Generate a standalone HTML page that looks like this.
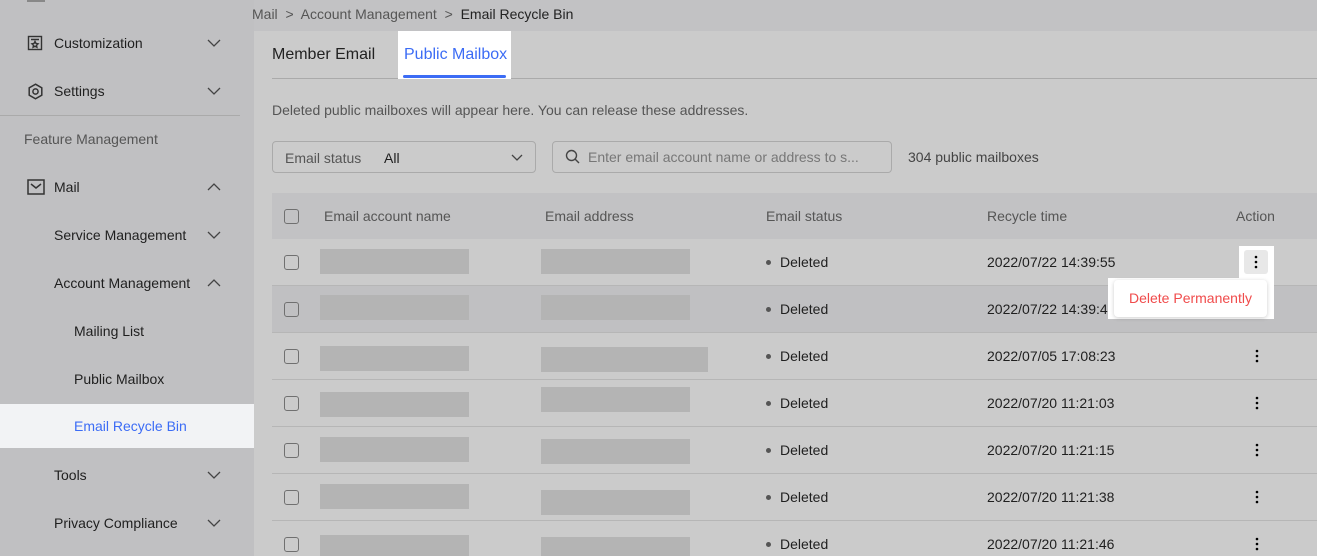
<!DOCTYPE html>
<html><head><style>
*{box-sizing:border-box;margin:0;padding:0}
html{width:1317px;height:556px;overflow:hidden}
body{width:1317px;height:556px;overflow:hidden;background:#c2c2c4;font-family:"Liberation Sans",sans-serif;font-size:14px;color:#1f1f1f;position:relative}
.sb{position:absolute;left:0;top:0;width:254px;height:556px;background:#c0c0c2}
.it{position:absolute;left:0;width:254px;height:44px;display:flex;align-items:center}
.chev{position:absolute;left:207px;width:14px;height:14px}
.main{position:absolute;left:254px;top:31px;width:1063px;height:525px;background:#cbcbcb}
.abs{position:absolute}
.row{position:absolute;left:272px;width:1045px;height:47px;border-bottom:1px solid #b6b6b6}
.cb{position:absolute;left:12px;top:16px;width:15px;height:15px;border:1px solid #707070;border-radius:3px}
.ph{position:absolute;height:25px;background:#b4b4b4}
.st{position:absolute;left:494px;top:15px}
.st:before{content:"";display:inline-block;width:5px;height:5px;border-radius:50%;background:#555;margin-right:9px;vertical-align:2px}
.tm{position:absolute;left:715px;top:15px}
.dots{position:absolute;left:982px;top:15px;width:6px;height:16px}
</style></head><body>
<div class="sb">
<div class="abs" style="left:27px;top:0;width:18px;height:2px;background:#888"></div>
<div class="it" style="top:21px"><svg style="position:absolute;left:27px" width="16" height="16" viewBox="0 0 16 16" fill="none" stroke="#333" stroke-width="1.4"><rect x="1.5" y="1.5" width="13" height="13"/><path d="M4 4.5h8M8 6.5l1 2 2 .3-1.5 1.4.4 2L8 11.2 6.1 12.2l.4-2L5 8.8l2-.3z"/></svg><span style="margin-left:54px">Customization</span><svg class="chev" viewBox="0 0 14 14"><path d="M1 4l6 6 6-6" fill="none" stroke="#444" stroke-width="1.3"/></svg></div>
<div class="it" style="top:69px"><svg style="position:absolute;left:27px" width="17" height="17" viewBox="0 0 17 17" fill="none" stroke="#333" stroke-width="1.5"><path d="M8.5 1.2l6.3 3.6v7.4l-6.3 3.6-6.3-3.6V4.8z"/><circle cx="8.5" cy="8.5" r="2.6"/></svg><span style="margin-left:54px">Settings</span><svg class="chev" viewBox="0 0 14 14"><path d="M1 4l6 6 6-6" fill="none" stroke="#444" stroke-width="1.3"/></svg></div>
<div class="abs" style="left:0;top:115px;width:240px;height:1px;background:#aaa"></div>
<div class="it" style="top:117px;color:#555"><span style="margin-left:24px">Feature Management</span></div>
<div class="it" style="top:165px"><svg style="position:absolute;left:27px" width="18" height="16" viewBox="0 0 18 16" fill="none" stroke="#333" stroke-width="1.5"><rect x="1" y="1" width="16" height="14"/><path d="M4 5l5 4 5-4"/></svg><span style="margin-left:54px">Mail</span><svg class="chev" viewBox="0 0 14 14"><path d="M1 10l6-6 6 6" fill="none" stroke="#444" stroke-width="1.3"/></svg></div>
<div class="it" style="top:213px"><span style="margin-left:54px">Service Management</span><svg class="chev" viewBox="0 0 14 14"><path d="M1 4l6 6 6-6" fill="none" stroke="#444" stroke-width="1.3"/></svg></div>
<div class="it" style="top:261px"><span style="margin-left:54px">Account Management</span><svg class="chev" viewBox="0 0 14 14"><path d="M1 10l6-6 6 6" fill="none" stroke="#444" stroke-width="1.3"/></svg></div>
<div class="it" style="top:309px"><span style="margin-left:74px">Mailing List</span></div>
<div class="it" style="top:357px"><span style="margin-left:74px">Public Mailbox</span></div>
<div class="it" style="top:404px;background:#f2f3f5;color:#3c6cf5"><span style="margin-left:74px">Email Recycle Bin</span></div>
<div class="it" style="top:453px"><span style="margin-left:54px">Tools</span><svg class="chev" viewBox="0 0 14 14"><path d="M1 4l6 6 6-6" fill="none" stroke="#444" stroke-width="1.3"/></svg></div>
<div class="it" style="top:501px"><span style="margin-left:54px">Privacy Compliance</span><svg class="chev" viewBox="0 0 14 14"><path d="M1 4l6 6 6-6" fill="none" stroke="#444" stroke-width="1.3"/></svg></div>
</div>
<div class="abs" style="left:252px;top:6px;color:#555">Mail &nbsp;&gt;&nbsp; Account Management &nbsp;&gt;&nbsp; <span style="color:#222">Email Recycle Bin</span></div>
<div class="main"></div>
<div class="abs" style="left:272px;top:78px;width:1045px;height:1px;background:#aaa"></div>
<div class="abs" style="left:272px;top:46px;font-size:16px;color:#222">Member Email</div>
<div class="abs" style="left:398px;top:31px;width:113px;height:48px;background:#fff"><div style="position:absolute;left:6px;top:15px;font-size:16px;color:#3c6cf5">Public Mailbox</div><div style="position:absolute;left:5px;bottom:1px;width:103px;height:3px;background:#3c6cf5;border-radius:2px"></div></div>
<div class="abs" style="left:272px;top:102px;color:#555">Deleted public mailboxes will appear here. You can release these addresses.</div>
<div class="abs" style="left:272px;top:141px;width:264px;height:32px;border:1px solid #aaa;border-radius:4px"><span class="abs" style="left:12px;top:8px;color:#555">Email status</span><span class="abs" style="left:111px;top:8px">All</span><svg class="abs" style="left:238px;top:9px" width="12" height="12" viewBox="0 0 12 12"><path d="M1 4l5 5 5-5" fill="none" stroke="#444" stroke-width="1.3"/></svg></div>
<div class="abs" style="left:552px;top:141px;width:340px;height:32px;border:1px solid #aaa;border-radius:4px"><svg class="abs" style="left:12px;top:7px" width="15" height="15" viewBox="0 0 15 15" fill="none" stroke="#444" stroke-width="1.4"><circle cx="6.5" cy="6.5" r="5"/><path d="M10 10l4 4"/></svg><span class="abs" style="left:35px;top:7px;color:#777">Enter email account name or address to s...</span></div>
<div class="abs" style="left:908px;top:149px;color:#444">304 public mailboxes</div>
<div class="row" style="top:193px;height:46px;background:#c2c2c4;border:none;color:#555"><div class="cb"></div><span class="abs" style="left:52px;top:15px">Email account name</span><span class="abs" style="left:273px;top:15px">Email address</span><span class="abs" style="left:494px;top:15px">Email status</span><span class="abs" style="left:715px;top:15px">Recycle time</span><span class="abs" style="left:964px;top:15px">Action</span></div>
<div class="row" style="top:239px"><div class="cb"></div><div class="ph" style="left:48px;top:10px;width:149px"></div><div class="ph" style="left:269px;top:10px;width:149px"></div><div class="st">Deleted</div><div class="tm">2022/07/22 14:39:55</div></div>
<div class="row" style="top:286px;background:#c0c0c2"><div class="cb"></div><div class="ph" style="left:48px;top:9px;width:149px"></div><div class="ph" style="left:269px;top:9px;width:149px"></div><div class="st">Deleted</div><div class="tm">2022/07/22 14:39:41</div></div>
<div class="row" style="top:333px"><div class="cb"></div><div class="ph" style="left:48px;top:13px;width:149px"></div><div class="ph" style="left:269px;top:14px;width:167px"></div><div class="st">Deleted</div><div class="tm">2022/07/05 17:08:23</div><svg class="dots" viewBox="0 0 6 16"><circle cx="3" cy="3" r="1.3"/><circle cx="3" cy="8" r="1.3"/><circle cx="3" cy="13" r="1.3"/></svg></div>
<div class="row" style="top:380px"><div class="cb"></div><div class="ph" style="left:48px;top:12px;width:149px"></div><div class="ph" style="left:269px;top:7px;width:149px"></div><div class="st">Deleted</div><div class="tm">2022/07/20 11:21:03</div><svg class="dots" viewBox="0 0 6 16"><circle cx="3" cy="3" r="1.3"/><circle cx="3" cy="8" r="1.3"/><circle cx="3" cy="13" r="1.3"/></svg></div>
<div class="row" style="top:427px"><div class="cb"></div><div class="ph" style="left:48px;top:10px;width:149px"></div><div class="ph" style="left:269px;top:12px;width:149px"></div><div class="st">Deleted</div><div class="tm">2022/07/20 11:21:15</div><svg class="dots" viewBox="0 0 6 16"><circle cx="3" cy="3" r="1.3"/><circle cx="3" cy="8" r="1.3"/><circle cx="3" cy="13" r="1.3"/></svg></div>
<div class="row" style="top:474px"><div class="cb"></div><div class="ph" style="left:48px;top:10px;width:149px"></div><div class="ph" style="left:269px;top:16px;width:149px"></div><div class="st">Deleted</div><div class="tm">2022/07/20 11:21:38</div><svg class="dots" viewBox="0 0 6 16"><circle cx="3" cy="3" r="1.3"/><circle cx="3" cy="8" r="1.3"/><circle cx="3" cy="13" r="1.3"/></svg></div>
<div class="row" style="top:521px;height:35px;border:none"><div class="cb"></div><div class="ph" style="left:48px;top:14px;width:149px"></div><div class="ph" style="left:269px;top:16px;width:149px"></div><div class="st">Deleted</div><div class="tm">2022/07/20 11:21:46</div><svg class="dots" viewBox="0 0 6 16"><circle cx="3" cy="3" r="1.3"/><circle cx="3" cy="8" r="1.3"/><circle cx="3" cy="13" r="1.3"/></svg></div>
<div class="abs" style="left:1239px;top:246px;width:35px;height:32px;background:#fff"><div style="position:absolute;left:5px;top:4px;width:24px;height:24px;background:#e8e8e8;border-radius:3px"><svg style="position:absolute;left:9px;top:4px" width="6" height="16" viewBox="0 0 6 16"><circle cx="3" cy="3" r="1.3"/><circle cx="3" cy="8" r="1.3"/><circle cx="3" cy="13" r="1.3"/></svg></div></div>
<div class="abs" style="left:1108px;top:278px;width:166px;height:41px;background:#fff"><div style="position:absolute;left:6px;top:2px;width:153px;height:37px;border-radius:4px;box-shadow:0 1px 4px rgba(0,0,0,.2);color:#f04b4b;padding:10px 0 0 15px">Delete Permanently</div></div>
</body></html>
